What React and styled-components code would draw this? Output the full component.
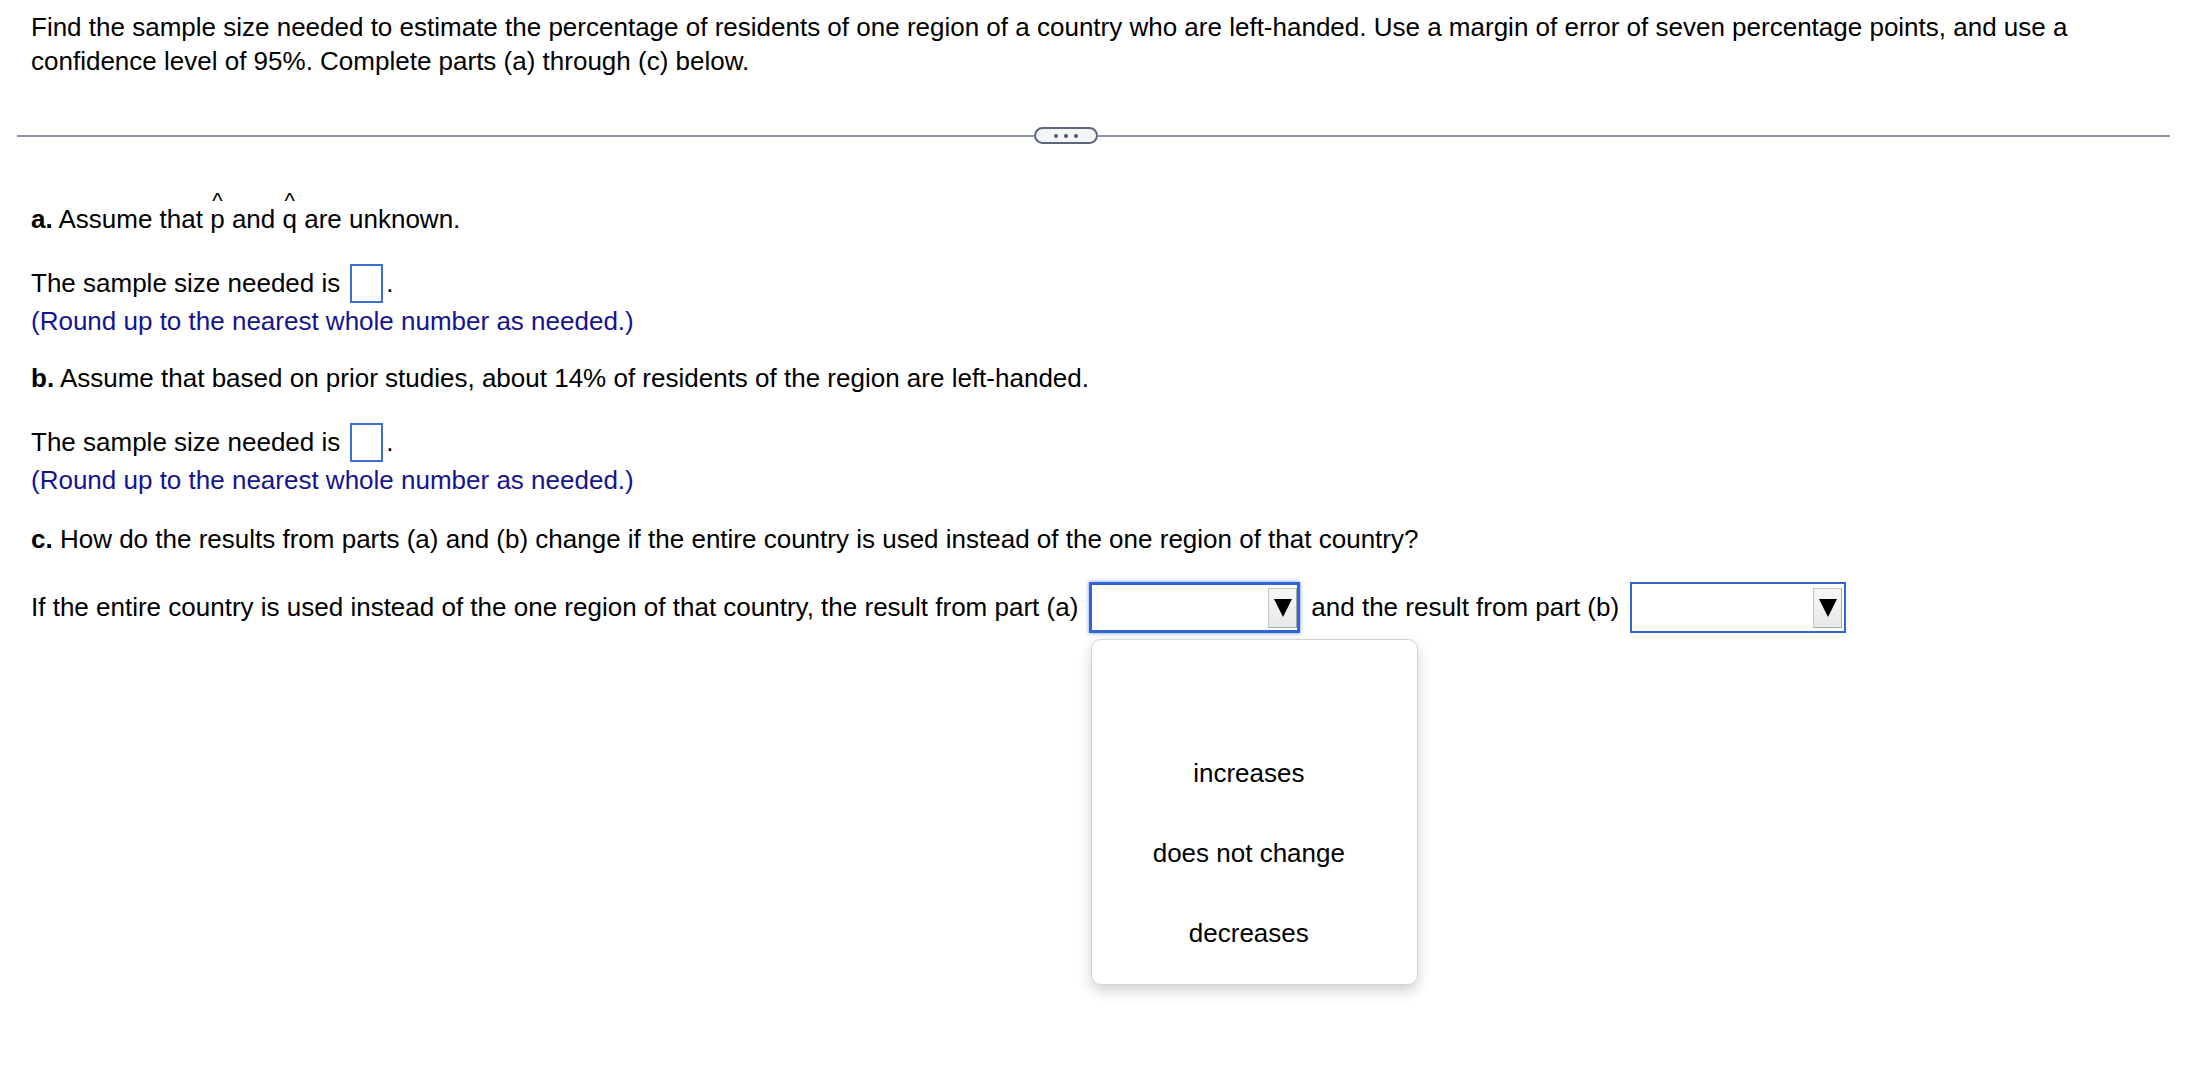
import React from 'react';
import styled, { createGlobalStyle } from 'styled-components';

const GlobalStyle = createGlobalStyle`
  html, body {
    margin: 0;
    padding: 0;
    background: #ffffff;
  }
  body {
    font-family: "Liberation Sans", Arial, Helvetica, sans-serif;
    font-size: 26px;
    color: #000000;
  }
`;

const Page = styled.div`
  width: 2190px;
  min-height: 1066px;
  position: relative;
`;

const Question = styled.div`
  padding: 10px 0 0 31px;
  width: 2120px;
  line-height: 34px;
`;

const DividerRow = styled.div`
  display: flex;
  align-items: center;
  margin: 49px 20px 0 17px;
  height: 17px;
`;

const Line = styled.div`
  height: 2px;
  background: #8a94a3;
  flex: ${p => (p.$grow ? '1 1 auto' : `0 0 ${p.$w}px`)};
`;

const MoreButton = styled.button`
  width: 64px;
  height: 17px;
  border: 2px solid #5b6778;
  border-radius: 9px;
  background: #f3f5f8;
  display: flex;
  align-items: center;
  justify-content: center;
  gap: 6px;
  padding: 0;
`;

const Dot = styled.span`
  width: 4px;
  height: 4px;
  border-radius: 50%;
  background: #4a5563;
`;

const Body = styled.div`
  padding-left: 31px;
`;

const Para = styled.div`
  line-height: 34px;
  margin-top: ${p => p.$mt || 0}px;
`;

const Bold = styled.b`
  font-weight: bold;
`;

const Hatted = styled.span`
  position: relative;
  display: inline-block;
`;

const Hat = styled.span`
  position: absolute;
  left: 50%;
  top: -12px;
  transform: translateX(-50%);
  font-size: 22px;
  line-height: 22px;
`;

const AnswerLine = styled.div`
  display: flex;
  align-items: center;
  height: 40px;
  margin-top: ${p => p.$mt || 0}px;
`;

const AnswerBox = styled.span`
  display: inline-block;
  width: 33px;
  height: 39px;
  box-sizing: border-box;
  border: 2px solid #3b6fd0;
  margin: 0 3px 0 10px;
  background: #fff;
`;

const Hint = styled.div`
  color: #14148f;
  line-height: 34px;
  margin-top: 1px;
`;

const SelectRow = styled.div`
  display: flex;
  align-items: center;
  margin-top: 26px;
  height: 51px;
`;

const SelectWrap = styled.div`
  position: relative;
  margin: 0 11px;
`;

const Select = styled.div`
  width: ${p => p.$w}px;
  height: 51px;
  box-sizing: border-box;
  border: ${p => (p.$focus ? '3px solid #2f64d6' : '2px solid #3366cc')};
  box-shadow: ${p => (p.$focus ? '0 0 4px rgba(47, 100, 214, 0.7)' : 'none')};
  background: #fff;
  display: flex;
  justify-content: flex-end;
  align-items: center;
  padding-right: ${p => (p.$focus ? 0 : 2)}px;
`;

const ArrowButton = styled.span`
  width: 29px;
  height: 40px;
  box-sizing: border-box;
  background: linear-gradient(#f6f6f6, #e8e8e8);
  border: 1px solid #c4c4c4;
  border-right-color: #a9a9a9;
  border-bottom-color: #a9a9a9;
  display: flex;
  align-items: center;
  justify-content: center;
`;

const Popup = styled.div`
  position: absolute;
  left: 2px;
  top: 57px;
  width: 327px;
  box-sizing: border-box;
  background: #fff;
  border: 1px solid #d4d4d4;
  border-radius: 10px;
  box-shadow: 0 6px 14px rgba(0, 0, 0, 0.18);
  padding: 13px 12px 11px 0;
  z-index: 2;
`;

const Option = styled.div`
  height: 80px;
  display: flex;
  align-items: center;
  justify-content: center;
`;

const Triangle = () => (
  <svg width="18" height="20" viewBox="0 0 18 20">
    <polygon points="0,1 18,1 9,19" fill="#000" />
  </svg>
);

const HatLetter = ({ ch }) => (
  <Hatted>
    {ch}
    <Hat>^</Hat>
  </Hatted>
);

export default function App() {
  return (
    <Page>
      <GlobalStyle />
      <Question>
        Find the sample size needed to estimate the percentage of residents of one region of a country who are
        left-handed. Use a margin of error of seven percentage points, and use a confidence level of 95%. Complete
        parts (a) through (c) below.
      </Question>

      <DividerRow>
        <Line $w={1017} />
        <MoreButton aria-label="more">
          <Dot />
          <Dot />
          <Dot />
        </MoreButton>
        <Line $grow />
      </DividerRow>

      <Body>
        <Para $mt={58}>
          <Bold>a.</Bold> Assume that <HatLetter ch="p" /> and <HatLetter ch="q" /> are unknown.
        </Para>

        <AnswerLine $mt={27}>
          The sample size needed is <AnswerBox />.
        </AnswerLine>
        <Hint>(Round up to the nearest whole number as needed.)</Hint>

        <Para $mt={23}>
          <Bold>b.</Bold> Assume that based on prior studies, about 14% of residents of the region are left-handed.
        </Para>

        <AnswerLine $mt={27}>
          The sample size needed is <AnswerBox />.
        </AnswerLine>
        <Hint>(Round up to the nearest whole number as needed.)</Hint>

        <Para $mt={25}>
          <Bold>c.</Bold> How do the results from parts (a) and (b) change if the entire country is used instead of
          the one region of that country?
        </Para>

        <SelectRow>
          <span>If the entire country is used instead of the one region of that country, the result from part (a)</span>
          <SelectWrap>
            <Select $w={211} $focus>
              <ArrowButton>
                <Triangle />
              </ArrowButton>
            </Select>
            <Popup>
              <Option />
              <Option>increases</Option>
              <Option>does not change</Option>
              <Option>decreases</Option>
            </Popup>
          </SelectWrap>
          <span>and the result from part (b)</span>
          <SelectWrap>
            <Select $w={216}>
              <ArrowButton>
                <Triangle />
              </ArrowButton>
            </Select>
          </SelectWrap>
        </SelectRow>
      </Body>
    </Page>
  );
}
